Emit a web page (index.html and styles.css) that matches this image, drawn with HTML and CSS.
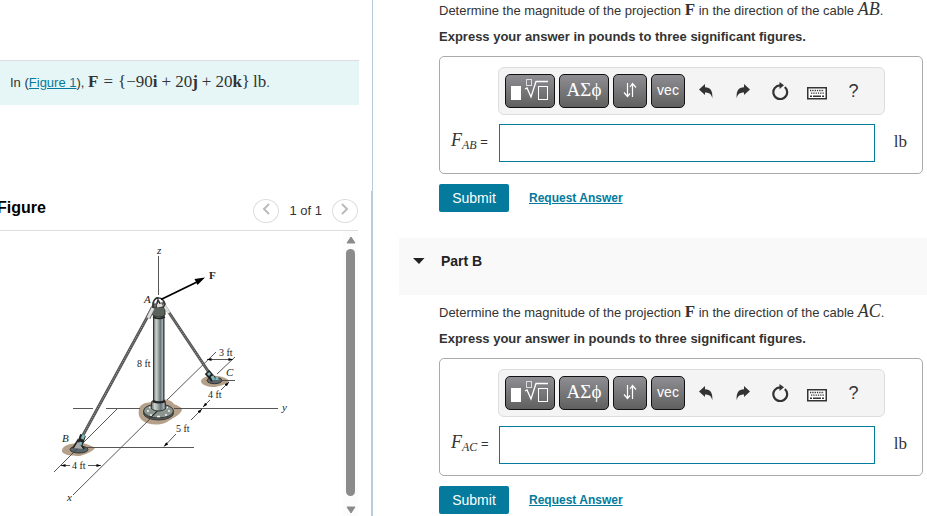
FILE: index.html
```html
<!DOCTYPE html>
<html lang="en">
<head>
    <meta charset="UTF-8">
    <meta name="viewport" content="width=device-width, initial-scale=1.0">
    <title>Projection of a Force</title>
    <link rel="stylesheet" href="styles.css">
</head>
<body>
    <!-- Shared toolbar icons -->
    <svg class="sprite" aria-hidden="true">
        <symbol id="icon-root" viewBox="0 0 38 22">
            <rect x="0" y="7" width="10" height="14" fill="#fff"/>
            <rect x="15.500" y=".5" width="5" height="6" fill="none" stroke="#ddd"/>
            <path d="M14 10l2-1 4 9 5-15.500h12" fill="none" stroke="#fff" stroke-width="1.300"/>
            <rect x="27.500" y="7.500" width="9" height="13" fill="none" stroke="#fff"/>
        </symbol>
        <symbol id="icon-arrows" viewBox="0 0 14 16">
            <path d="M4.500 1v13M1 10.500l3.500 4 2.500-3M9.500 15V2M7 5l2.500-3.500L13 5.500" fill="none" stroke="#fff" stroke-width="1.200"/>
        </symbol>
        <symbol id="icon-undo" viewBox="0 0 14 15">
            <path d="M0 5.500L6 0v3.200c5.500 0 8 3.800 7.300 11.300-.6-4-2.800-6-7.300-6V11z" fill="#333"/>
        </symbol>
        <symbol id="icon-redo" viewBox="0 0 14 15">
            <path d="M14 5.500L8 0v3.200C2.500 3.200 0 7 .7 14.500c.6-4 2.800-6 7.300-6V11z" fill="#333"/>
        </symbol>
        <symbol id="icon-reset" viewBox="0 0 18 18">
            <path d="M9.500 3.300A6.900 6.900 0 1 0 13.800 5" fill="none" stroke="#333" stroke-width="2.200"/>
            <path d="M8.500 0l4.500 3.300-4.500 3.700z" fill="#333"/>
        </symbol>
        <symbol id="icon-keyboard" viewBox="0 0 20 13">
            <rect x=".75" y=".75" width="18.500" height="11" fill="#fff" stroke="#333" stroke-width="1.500"/>
            <path d="M3 3.500h14M4 6.200h13" stroke="#333" stroke-width="1.300" stroke-dasharray="1.300 1"/>
            <path d="M3 9.300h2M6 9.300h8M15 9.300h2" stroke="#333" stroke-width="1.400"/>
        </symbol>
    </svg>

    <div class="page">
        <aside class="sidebar">
            <div class="prompt">
                In (<a href="#figure">Figure 1</a>),
                <span class="math"><b>F</b><span class="rel">=</span>{−90<b>i</b><span class="op">+</span>20<b>j</b><span class="op">+</span>20<b>k</b>}<span class="unit">lb</span></span>.
            </div>

            <section class="figure" id="figure">
                <div class="figure-header">
                    <h2>Figure</h2>
                    <div class="pager">
                        <button type="button" aria-label="Previous figure">
                            <svg width="8" height="12" viewBox="0 0 8 12"><path d="M7 1L2 6l5 5" fill="none" stroke="#bbb" stroke-width="2"/></svg>
                        </button>
                        <span>1 of 1</span>
                        <button type="button" aria-label="Next figure">
                            <svg width="8" height="12" viewBox="0 0 8 12"><path d="M1 1l5 5-5 5" fill="none" stroke="#bbb" stroke-width="2"/></svg>
                        </button>
                    </div>
                </div>

                <div class="figure-body">
                    <svg class="diagram" width="300" height="285" viewBox="0 231 300 285" role="img" aria-label="Post with two cables">
                        <defs>
                            <linearGradient id="steel">
                                <stop offset="0" stop-color="#59605f"/>
                                <stop offset=".25" stop-color="#d0d6cf"/>
                                <stop offset=".5" stop-color="#929d9d"/>
                                <stop offset=".65" stop-color="#65727a"/>
                                <stop offset=".85" stop-color="#a5afaf"/>
                                <stop offset="1" stop-color="#414848"/>
                            </linearGradient>
                            <marker id="arrow" viewBox="0 0 6 4" refX="6" refY="2" markerWidth="5" markerHeight="3" markerUnits="userSpaceOnUse" orient="auto-start-reverse">
                                <path d="M0 0l6 2-6 2z"/>
                            </marker>
                        </defs>

                        <!-- Ground patches -->
                        <g fill="#b5a08a">
                            <path d="M139 409c1-6 9-7 17-7 6-5 16-2 18 2 4 2 8 3 8 6-2 5-9 8-15 12-8 4-19 3-24-1-4-3-5-7-4-12z"/>
                            <path d="M62 450c1-6 12-7 20-7 6 1 10 3 13 5-3 4-9 6-15 8-8 0-19-1-18-6z"/>
                            <path d="M201 381c1-5 10-6 17-5 5 1 9 2 11 5-2 3-8 5-14 6-7 0-14-2-14-6z"/>
                        </g>

                        <!-- Base plates -->
                        <g stroke="#333">
                            <ellipse cx="158.500" cy="413" rx="15" ry="7" fill="#59605f"/>
                            <ellipse cx="158.500" cy="411" rx="15" ry="7" fill="#8b9690"/>
                            <ellipse cx="79" cy="449.500" rx="9" ry="3.500" fill="#59656a"/>
                            <ellipse cx="214.500" cy="380.500" rx="7.500" ry="3.200" fill="#59656a"/>
                        </g>
                        <path d="M147 411h2M150 415h2M157 416.500h3M165 415h2M168 411h2M149 407.500h2M166 407.500h2" stroke="#f2f2f2" stroke-width="1.500"/>

                        <!-- Axes and dimension lines -->
                        <g fill="none" stroke="#444" stroke-width=".9">
                            <path d="M158.500 256v39M73 408.500h20M106 408.500h34M174 408.500h104"/>
                            <path d="M73 495l85-84M167 400l49-48"/>
                            <path d="M54 472l63-63M84 447.500h110M217 374l18-17M222 380.500h13"/>
                            <path d="M70 465.500h-9" marker-end="url(#arrow)"/>
                            <path d="M88 465.500h13" marker-end="url(#arrow)"/>
                            <path d="M207 359.500h26" marker-start="url(#arrow)" marker-end="url(#arrow)"/>
                            <path d="M176 434l-12 12.500" marker-end="url(#arrow)"/>
                            <path d="M191 420l11-11" marker-end="url(#arrow)"/>
                            <path d="M210 400l-7 7" marker-end="url(#arrow)"/>
                            <path d="M221 390l8-8" marker-end="url(#arrow)"/>
                        </g>

                        <!-- Post -->
                        <path d="M152 401h13l1 7c-3 4-12 4-15 0z" fill="url(#steel)" stroke="#333"/>
                        <rect x="153.500" y="316" width="10.500" height="86" fill="url(#steel)" stroke="#333"/>
                        <path d="M153 401q6 3 12 0" fill="none" stroke="#222" stroke-width="2"/>
                        <path d="M152.500 307h12.500v8q-6 4-12.500 0z" fill="#59635c" stroke="#333"/>
                        <path d="M153 317q6 3 12 0" fill="none" stroke="#222" stroke-width="1.500"/>
                        <path d="M157 411l-7 7" stroke="#333"/>

                        <!-- Cables -->
                        <g fill="none">
                            <path d="M155 303L82 437M162 302l48 72" stroke="#555" stroke-width="3"/>
                            <path d="M155 303L82 437M162 302l48 72" stroke="#aaa" stroke-dasharray="1 1.500"/>
                            <path d="M153 308l-5 10" stroke="#666" stroke-width="5"/>
                            <path d="M153 308l-5 10M164 305l5 8" stroke="#ddd" stroke-width="3"/>
                            <path d="M153 308v-5q2-6 6-5 4 0 6 6l-2 4M156 307l2-7 4 7" stroke="#333" stroke-width="1.600"/>
                            <path d="M157 306l5-1" stroke="#ddd" stroke-width="3"/>
                        </g>

                        <!-- Anchors at B and C -->
                        <g fill="none">
                            <path d="M83 435l-3 9M207 372l7 8" stroke="#222" stroke-width="6"/>
                            <path d="M73 448l5-8 6 9" fill="#aaa" stroke="#222" stroke-width="1.600"/>
                            <path d="M84 435l-2 4M81 442l-1 3M208 373l2 2M212 376l2 4M217 377v3" stroke="#82b7ba" stroke-width="3"/>
                        </g>

                        <!-- Force F -->
                        <path d="M161 299.500l37-18" stroke="#000" stroke-width="1.800"/>
                        <path d="M205 277.500l-7.500 7.500-3-6z" fill="#000"/>

                        <g class="diagram-text">
                            <text class="var" x="157" y="254">z</text>
                            <text class="var" x="144" y="303">A</text>
                            <text class="force" x="209" y="279">F</text>
                            <text class="var" x="226" y="376">C</text>
                            <text class="var" x="62" y="442">B</text>
                            <text class="var" x="282" y="411">y</text>
                            <text class="var" x="67" y="501">x</text>
                            <text x="219" y="356">3 ft</text>
                            <text x="137" y="367">8 ft</text>
                            <text x="208" y="398">4 ft</text>
                            <text x="176" y="432">5 ft</text>
                            <text x="72" y="469">4 ft</text>
                        </g>
                    </svg>

                    <div class="scrollbar">
                        <svg width="10" height="8" viewBox="0 0 10 8"><path d="M5 1L9 7H1z" fill="#8b8b8b" stroke="#8b8b8b" stroke-linejoin="round"/></svg>
                        <div class="thumb"></div>
                        <svg width="10" height="8" viewBox="0 0 10 8"><path d="M5 7L1 1h8z" fill="#8b8b8b" stroke="#8b8b8b" stroke-linejoin="round"/></svg>
                    </div>
                </div>
            </section>
        </aside>

        <main class="parts">
            <form class="part">
                <p>Determine the magnitude of the projection <b class="math">F</b> in the direction of the cable <i class="math">AB</i>.</p>
                <p class="instructions">Express your answer in pounds to three significant figures.</p>
                <div class="answer">
                    <div class="toolbar">
                        <button type="button" class="key wide" aria-label="Templates"><svg width="38" height="22"><use href="#icon-root"/></svg></button>
                        <button type="button" class="key wide greek">ΑΣϕ</button>
                        <button type="button" class="key" aria-label="Scripts"><svg width="14" height="16"><use href="#icon-arrows"/></svg></button>
                        <button type="button" class="key">vec</button>
                        <button type="button" class="tool" aria-label="Undo"><svg width="14" height="15"><use href="#icon-undo"/></svg></button>
                        <button type="button" class="tool" aria-label="Redo"><svg width="14" height="15"><use href="#icon-redo"/></svg></button>
                        <button type="button" class="tool" aria-label="Reset"><svg width="18" height="18"><use href="#icon-reset"/></svg></button>
                        <button type="button" class="tool keyboard" aria-label="Keyboard shortcuts"><svg width="20" height="13"><use href="#icon-keyboard"/></svg></button>
                        <button type="button" class="tool">?</button>
                    </div>
                    <label for="answerAB"><i class="math">F<sub>AB</sub></i> =</label>
                    <input type="text" id="answerAB">
                    <span class="math units">lb</span>
                </div>
                <div class="actions">
                    <button type="submit" class="submit">Submit</button>
                    <a href="#">Request Answer</a>
                </div>
            </form>

            <h2 class="part-header">
                <svg width="12" height="6" viewBox="0 0 12 6"><path d="M0 0h11.500L6 6z" fill="#222"/></svg>
                Part B
            </h2>

            <form class="part">
                <p>Determine the magnitude of the projection <b class="math">F</b> in the direction of the cable <i class="math">AC</i>.</p>
                <p class="instructions">Express your answer in pounds to three significant figures.</p>
                <div class="answer">
                    <div class="toolbar">
                        <button type="button" class="key wide" aria-label="Templates"><svg width="38" height="22"><use href="#icon-root"/></svg></button>
                        <button type="button" class="key wide greek">ΑΣϕ</button>
                        <button type="button" class="key" aria-label="Scripts"><svg width="14" height="16"><use href="#icon-arrows"/></svg></button>
                        <button type="button" class="key">vec</button>
                        <button type="button" class="tool" aria-label="Undo"><svg width="14" height="15"><use href="#icon-undo"/></svg></button>
                        <button type="button" class="tool" aria-label="Redo"><svg width="14" height="15"><use href="#icon-redo"/></svg></button>
                        <button type="button" class="tool" aria-label="Reset"><svg width="18" height="18"><use href="#icon-reset"/></svg></button>
                        <button type="button" class="tool keyboard" aria-label="Keyboard shortcuts"><svg width="20" height="13"><use href="#icon-keyboard"/></svg></button>
                        <button type="button" class="tool">?</button>
                    </div>
                    <label for="answerAC"><i class="math">F<sub>AC</sub></i> =</label>
                    <input type="text" id="answerAC">
                    <span class="math units">lb</span>
                </div>
                <div class="actions">
                    <button type="submit" class="submit">Submit</button>
                    <a href="#">Request Answer</a>
                </div>
            </form>
        </main>
    </div>

    <script>
        document.querySelectorAll('.part').forEach((form) => {
            form.addEventListener('submit', (e) => e.preventDefault());
        });
    </script>
</body>
</html>
```
FILE: styles.css
```css
* {
    margin: 0;
    padding: 0;
    box-sizing: border-box;
}

body {
    background: #fff;
    color: #333;
    font-family: Arial, 'Liberation Sans', sans-serif;
    font-size: 13px;
    line-height: 18px;
}

button,
input {
    font: inherit;
}

button {
    cursor: pointer;
}

a {
    color: #047a9c;
}

.sprite {
    display: none;
}

.math {
    font-family: 'Liberation Serif', 'Times New Roman', serif;
    font-size: 17px;
    line-height: 14px;
}

i.math {
    font-size: 18px;
}

.page {
    display: grid;
    grid-template-columns: 373fr 554fr;
    grid-template-rows: 100%;
    height: 100vh;
    overflow: hidden;
}

/* Left column */
.sidebar {
    display: flex;
    flex-direction: column;
    padding-top: 60px;
    border-right: 1px solid #b8cadd;
}

.prompt {
    margin-right: 13px;
    padding: 13px 10px;
    background: #e6f6f6;
    border-top: 1px solid #ddd;
}

.rel {
    margin: 0 5px;
}

.op {
    margin: 0 4px;
}

.unit {
    margin-left: 3px;
}

.figure {
    flex: 1;
    display: flex;
    flex-direction: column;
    margin-top: 86px;
    margin-right: -1px;
    border-right: 2px solid #b8cadd;
}

.figure-header {
    display: flex;
    justify-content: space-between;
    align-items: center;
    height: 40px;
    margin-right: 13px;
    border-bottom: 1px solid #ddd;
}

.figure-header h2 {
    margin-left: -3px;
    padding-bottom: 6px;
    color: #000;
    font-size: 16px;
}

.pager {
    display: flex;
    align-items: center;
    gap: 10px;
}

.pager button {
    width: 26px;
    height: 24px;
    background: #fff;
    border: 1px solid #ddd;
    border-radius: 50%;
}

.figure-body {
    flex: 1;
    display: flex;
    justify-content: space-between;
    align-items: flex-start;
    margin-right: 13px;
}

.diagram-text {
    font-family: 'Liberation Serif', 'Times New Roman', serif;
    font-size: 10px;
    fill: #222;
}

.diagram-text .var {
    font-size: 11px;
    font-style: italic;
}

.diagram-text .force {
    font-size: 11px;
    font-weight: bold;
}

.scrollbar {
    align-self: stretch;
    display: flex;
    flex-direction: column;
    align-items: center;
    gap: 5px;
    width: 15px;
    padding: 5px 0 2px;
    background: #fcfcfc;
}

.scrollbar svg {
    flex-shrink: 0;
}

.thumb {
    flex: 1;
    width: 9px;
    margin-bottom: 5px;
    background: #8b8b8b;
    border-radius: 5px;
}

/* Right column */
.parts {
    padding-left: 26px;
}

.part {
    padding: 2px 4px 26px 40px;
}

.instructions {
    margin: 8px 0 10px;
    font-weight: bold;
}

.answer {
    display: grid;
    grid-template-columns: 48px 1fr 37px;
    align-items: center;
    row-gap: 9px;
    padding: 10px 10px 11px 11px;
    border: 1px solid #aaa;
    border-radius: 5px;
}

.toolbar {
    grid-column: 2 / 4;
    display: flex;
    align-items: center;
    gap: 4px;
    height: 48px;
    margin-left: -1px;
    margin-right: 27px;
    padding: 0 6px;
    background: #f4f4f4;
    border: 1px solid #ddd;
    border-radius: 6px;
}

.key {
    display: flex;
    justify-content: center;
    align-items: center;
    width: 34px;
    height: 34px;
    padding-bottom: 2px;
    background: linear-gradient(#8e8e93, #606060);
    border: 1px solid #111;
    border-radius: 5px;
    color: #fff;
    font-size: 14px;
}

.key.wide {
    width: 50px;
}

.key.greek {
    font-family: 'Liberation Serif', 'Times New Roman', serif;
    font-size: 19px;
}

.tool {
    display: flex;
    justify-content: center;
    align-items: center;
    width: 33px;
    height: 34px;
    background: none;
    border: none;
    color: #333;
    font-size: 18px;
}

.tool.keyboard {
    padding-top: 4px;
}

.answer label {
    padding-bottom: 2px;
    white-space: nowrap;
}

.answer sub {
    font-size: 12px;
    line-height: 12px;
    vertical-align: -3px;
}

.answer input {
    width: 100%;
    height: 38px;
    padding: 0 8px;
    border: 1px solid #047a9c;
}

.units {
    justify-self: end;
    padding: 0 5px 2px 0;
}

.actions {
    display: flex;
    align-items: center;
    gap: 20px;
    margin-top: 10px;
}

.actions a {
    font-size: 12px;
    font-weight: bold;
}

.submit {
    width: 70px;
    height: 28px;
    background: #047a9c;
    border: none;
    border-radius: 2px;
    color: #fff;
    font-size: 14px;
}

.part-header {
    display: flex;
    align-items: center;
    gap: 16px;
    height: 57px;
    padding: 0 14px 12px;
    background: #f9f9f9;
    color: #222;
    font-size: 14px;
}

.part-header + .part {
    padding-top: 9px;
}
```
